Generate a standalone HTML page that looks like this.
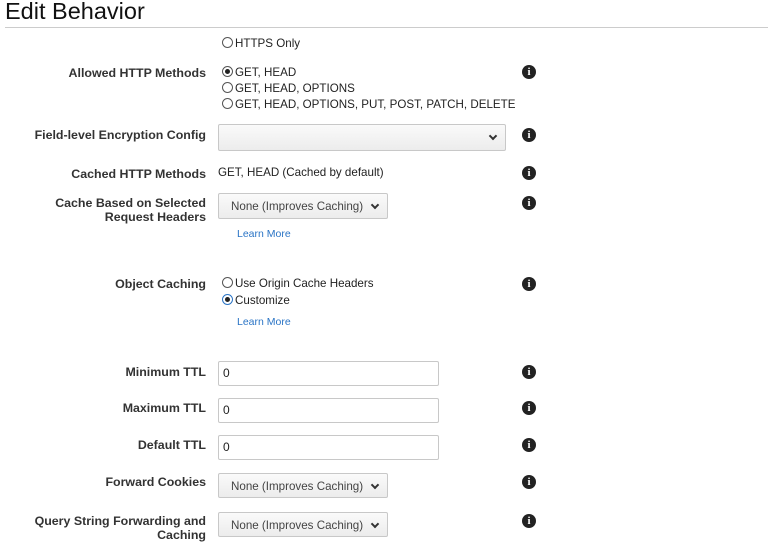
<!DOCTYPE html>
<html><head><meta charset="utf-8"><style>
body{margin:0;width:768px;height:552px;background:#fff;font-family:"Liberation Sans",Arial,sans-serif;position:relative;overflow:hidden;color:#222}
h1{position:absolute;left:5px;top:-2px;margin:0;font-weight:normal;font-size:23.5px;color:#111}
.hr{position:absolute;left:5px;right:0;top:27px;border-top:1px solid #ccc}
.l{position:absolute;right:562px;font-weight:bold;font-size:12.4px;color:#333;text-align:right;line-height:14px;white-space:nowrap}
.t{position:absolute;font-size:11.6px;color:#222;line-height:14px;white-space:nowrap}
.r{display:inline-block;width:9px;height:9px;border:1px solid #555;border-radius:50%;vertical-align:-1px;margin-right:2px;position:relative;background:#fff}
.r.on:after{content:"";position:absolute;left:2px;top:2px;width:5px;height:5px;border-radius:50%;background:#222}
.i{position:absolute;left:522px;width:14px;height:14px;border-radius:50%;background:#222;color:#fff;font:bold 11px "Liberation Serif",serif;text-align:center;line-height:14px}
.sel{position:absolute;left:218px;width:168px;height:24px;border:1px solid #c8c8c8;border-radius:2px;background:linear-gradient(#fafafa,#ececec);font-size:11.6px;color:#444;line-height:24px;box-sizing:border-box;padding-left:12px}
.sel:after{content:"";position:absolute;right:9px;top:8px;width:4px;height:4px;border-right:2px solid #333;border-bottom:2px solid #333;transform:rotate(45deg)}
.in{position:absolute;left:218px;width:221px;height:25px;border:1px solid #c8c8c8;border-radius:2px;box-sizing:border-box;font-size:12px;line-height:23px;padding-left:4px}
.lm{position:absolute;left:237px;font-size:10.5px;color:#2a74c5}
</style></head><body>
<h1>Edit Behavior</h1><div class="hr"></div>
<div class="t" style="left:222px;top:37px"><span class="r"></span>HTTPS Only</div>
<div class="l" style="top:66px">Allowed HTTP Methods</div>
<div class="t" style="left:222px;top:66px"><span class="r on"></span>GET, HEAD</div>
<div class="t" style="left:222px;top:82px"><span class="r"></span>GET, HEAD, OPTIONS</div>
<div class="t" style="left:222px;top:98px"><span class="r"></span>GET, HEAD, OPTIONS, PUT, POST, PATCH, DELETE</div>
<div class="i" style="top:65px">i</div>
<div class="l" style="top:128px">Field-level Encryption Config</div>
<div class="sel" style="top:124px;width:288px;height:27px"></div>
<div class="i" style="top:128px">i</div>
<div class="l" style="top:167px">Cached HTTP Methods</div>
<div class="t" style="left:218px;top:166px">GET, HEAD (Cached by default)</div>
<div class="i" style="top:166px">i</div>
<div class="l" style="top:196px">Cache Based on Selected<br>Request Headers</div>
<div class="sel" style="top:193px;width:170px;height:26px;line-height:26px">None (Improves Caching)</div>
<div class="i" style="top:196px">i</div>
<div class="lm" style="top:228px">Learn More</div>
<div class="l" style="top:277px">Object Caching</div>
<div class="t" style="left:222px;top:277px"><span class="r"></span>Use Origin Cache Headers</div>
<div class="t" style="left:222px;top:294px"><span class="r on" style="border-color:#2a74c5"></span>Customize</div>
<div class="i" style="top:277px">i</div>
<div class="lm" style="top:316px">Learn More</div>
<div class="l" style="top:365px">Minimum TTL</div>
<div class="in" style="top:361px">0</div>
<div class="i" style="top:365px">i</div>
<div class="l" style="top:401px">Maximum TTL</div>
<div class="in" style="top:398px">0</div>
<div class="i" style="top:401px">i</div>
<div class="l" style="top:438px">Default TTL</div>
<div class="in" style="top:435px">0</div>
<div class="i" style="top:438px">i</div>
<div class="l" style="top:475px">Forward Cookies</div>
<div class="sel" style="top:473px;width:170px;height:25px;line-height:25px">None (Improves Caching)</div>
<div class="i" style="top:475px">i</div>
<div class="l" style="top:514px">Query String Forwarding and<br>Caching</div>
<div class="sel" style="top:512px;width:170px;height:25px;line-height:25px">None (Improves Caching)</div>
<div class="i" style="top:514px">i</div>
</body></html>
